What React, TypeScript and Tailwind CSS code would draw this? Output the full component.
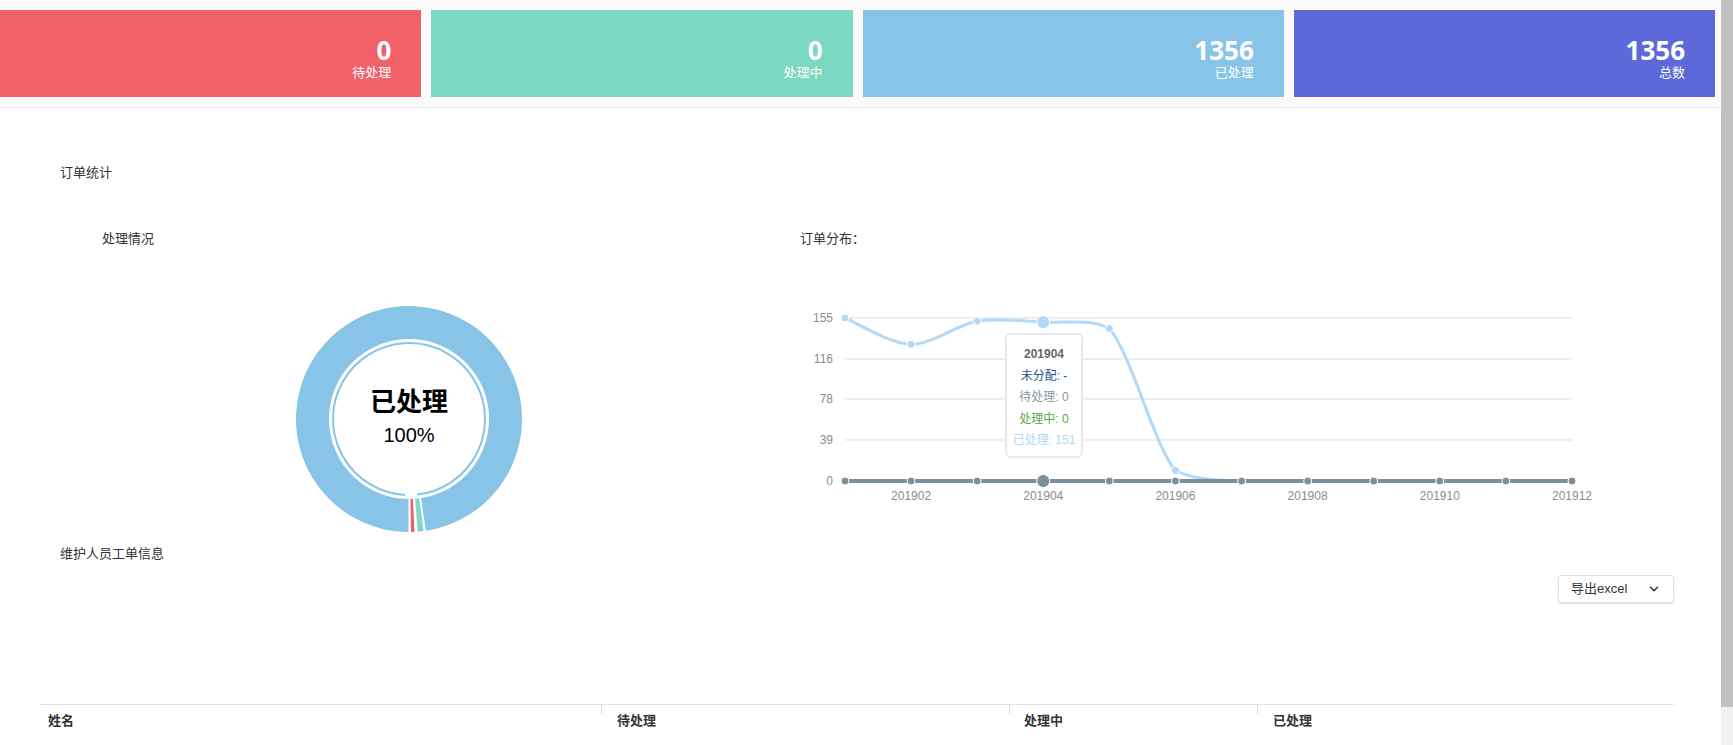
import React from "react";
import { ChevronDown } from "lucide-react";

const FONT = "'Liberation Sans','Noto Sans CJK SC',sans-serif";

const cards = [
  { value: "0", label: "待处理", bg: "bg-[#f0616a]" },
  { value: "0", label: "处理中", bg: "bg-[#7bd8c2]" },
  { value: "1356", label: "已处理", bg: "bg-[#87c4e8]" },
  { value: "1356", label: "总数", bg: "bg-[#5d69d9]" },
];

function sector(cx: number, cy: number, r0: number, r1: number, a0: number, a1: number) {
  const rad = (a: number) => (a * Math.PI) / 180;
  const p = (r: number, a: number) => [cx + r * Math.cos(rad(a)), cy + r * Math.sin(rad(a))];
  const large = a1 - a0 > 180 ? 1 : 0;
  const [x1, y1] = p(r1, a0);
  const [x2, y2] = p(r1, a1);
  const [x3, y3] = p(r0, a1);
  const [x4, y4] = p(r0, a0);
  return `M${x1},${y1} A${r1},${r1} 0 ${large} 1 ${x2},${y2} L${x3},${y3} A${r0},${r0} 0 ${large} 0 ${x4},${y4} Z`;
}

function arc(cx: number, cy: number, r: number, a0: number, a1: number) {
  const rad = (a: number) => (a * Math.PI) / 180;
  const large = a1 - a0 > 180 ? 1 : 0;
  return `M${cx + r * Math.cos(rad(a0))},${cy + r * Math.sin(rad(a0))} A${r},${r} 0 ${large} 1 ${cx + r * Math.cos(rad(a1))},${cy + r * Math.sin(rad(a1))}`;
}

function Donut() {
  const c = 120;
  return (
    <svg width="240" height="240" viewBox="0 0 240 240">
      <path d={sector(c, c, 80, 113, 90.3, 441.4)} fill="#87c4e8" />
      <path d={sector(c, c, 80, 113, 87.2, 89.0)} fill="#f0616a" />
      <path d={sector(c, c, 80, 113, 82.6, 85.6)} fill="#7bd8c2" />
      <path d={arc(c, c, 76, 93, 444)} fill="none" stroke="#87c4e8" strokeWidth="2" />
      <text x={c} y={103} textAnchor="middle" dominantBaseline="central" fontSize="26" fontWeight="700" fill="#000" style={{ fontFamily: FONT }}>
        已处理
      </text>
      <text x={c} y={136} textAnchor="middle" dominantBaseline="central" fontSize="20" fill="#000" style={{ fontFamily: FONT }}>
        100%
      </text>
    </svg>
  );
}

const blueVals = [155, 130, 152, 151, 145, 10, 0, 0, 0, 0, 0, 0];
const xAt = (i: number) => 45 + i * 66.09;
const yAt = (v: number) => 211 - (v * 163) / 155;

function smoothPath(pts: { x: number; y: number }[], s: number) {
  const minY = Math.min(...pts.map((p) => p.y));
  const maxY = Math.max(...pts.map((p) => p.y));
  const cl = (v: number) => Math.max(minY, Math.min(maxY, v));
  let d = `M${pts[0].x},${pts[0].y}`;
  for (let i = 0; i < pts.length - 1; i++) {
    const p0 = pts[i - 1] || pts[i];
    const p1 = pts[i];
    const p2 = pts[i + 1];
    const p3 = pts[i + 2] || p2;
    const c1x = p1.x + (p2.x - p0.x) * s;
    const c1y = cl(p1.y + (p2.y - p0.y) * s);
    const c2x = p2.x - (p3.x - p1.x) * s;
    const c2y = cl(p2.y - (p3.y - p1.y) * s);
    d += ` C${c1x},${c1y} ${c2x},${c2y} ${p2.x},${p2.y}`;
  }
  return d;
}

function LineChart() {
  const ticks = [155, 116, 78, 39, 0];
  const pts = blueVals.map((v, i) => ({ x: xAt(i), y: yAt(v) }));
  const labels = ["201902", "201904", "201906", "201908", "201910", "201912"];
  return (
    <div className="relative w-[800px] h-[240px]">
      <svg width="800" height="240" viewBox="0 0 800 240">
        {ticks.map((t) => (
          <g key={t}>
            <line x1="45" x2="772" y1={yAt(t)} y2={yAt(t)} stroke={t === 155 ? "#e8e8e8" : "#dedede"} strokeWidth={t === 155 ? 1.5 : 1} />
            <text x="33" y={yAt(t)} textAnchor="end" dominantBaseline="central" fontSize="12" fill="#8c8c8c" style={{ fontFamily: FONT }}>
              {t}
            </text>
          </g>
        ))}
        {labels.map((l, k) => (
          <text key={l} x={xAt(k * 2 + 1)} y="226" textAnchor="middle" dominantBaseline="central" fontSize="12" fill="#8c8c8c" style={{ fontFamily: FONT }}>
            {l}
          </text>
        ))}
        <path d={smoothPath(pts, 0.16)} fill="none" stroke="#b3d9f7" strokeWidth="3" />
        {pts.map((p, i) => (
          <circle key={i} cx={p.x} cy={p.y} r={i === 3 ? 6.5 : 4} fill="#b3d9f7" stroke="#fff" strokeWidth="1" />
        ))}
        <line x1={xAt(0)} x2={xAt(11)} y1={yAt(0)} y2={yAt(0)} stroke="#7e8f9c" strokeWidth="4" />
        {blueVals.map((_, i) => (
          <circle key={i} cx={xAt(i)} cy={yAt(0)} r={i === 3 ? 6.5 : 4} fill="#7e8f9c" stroke="#fff" strokeWidth="1" />
        ))}
      </svg>
      <div className="absolute left-[205px] top-[63px] w-[78px] h-[125px] rounded-[6px] border-2 border-[#e8e8e8] bg-white/90 pt-[9px] text-center text-[12px] leading-[21.5px]" style={{ fontFamily: FONT }}>
        <div className="font-bold text-[#666]">201904</div>
        <div className="text-[#1f4f96]">未分配: -</div>
        <div className="text-[#8795a1]">待处理: 0</div>
        <div className="text-[#57a845]">处理中: 0</div>
        <div className="text-[#b3d9f7]">已处理: 151</div>
      </div>
    </div>
  );
}

export default function App() {
  return (
    <div className="flex w-[1733px] h-[745px] overflow-hidden bg-white text-[#333]" style={{ fontFamily: FONT }}>
      <div className="w-[1721px] shrink-0">
        <div className="bg-[#fafafa] pt-[10px] pb-[10px] pr-[6px] border-b border-[#ebebeb]">
          <div className="grid grid-cols-4 gap-[10px]">
            {cards.map((c, i) => (
              <div key={i} className={`${c.bg} h-[87px] flex flex-col items-end pt-[26px] pr-[30px] text-white`}>
                <div className="text-[26px] font-bold leading-[28px]" style={{ fontFamily: "'Open Sans','Noto Sans CJK SC',sans-serif" }}>
                  {c.value}
                </div>
                <div className="text-[13px] leading-[16px] mt-[1px]">{c.label}</div>
              </div>
            ))}
          </div>
        </div>
        <div className="pl-[40px] pr-[47px]">
          <div className="ml-[20px] mt-[55px] text-[13px] leading-[20px]">订单统计</div>
          <div className="flex mt-[46px]">
            <div className="w-[760px] shrink-0 flex flex-col">
              <div className="ml-[62px] text-[13px] leading-[20px]">处理情况</div>
              <div className="ml-[249px] mt-[50px]">
                <Donut />
              </div>
            </div>
            <div className="flex flex-col">
              <div className="text-[13px] leading-[20px]">订单分布：</div>
              <div className="mt-[21px]">
                <LineChart />
              </div>
            </div>
          </div>
          <div className="ml-[20px] mt-[5px] text-[13px] leading-[20px]">维护人员工单信息</div>
          <div className="flex justify-end mt-[11px]">
            <button className="w-[116px] h-[28px] flex items-center justify-between pl-[12px] pr-[12px] rounded-[4px] border border-[#dcdfe6] bg-white shadow-[0_1px_2px_rgba(0,0,0,0.12)] text-[13px] text-[#333]">
              <span>导出excel</span>
              <ChevronDown size={14} strokeWidth={2.6} />
            </button>
          </div>
          <div className="mt-[101px] border-t border-[#e4e4e4] flex text-[13px] font-bold leading-[16px]">
            <div className="w-[561px] pt-[8px] pl-[8px]">姓名</div>
            <div className="relative w-[408px] pt-[8px] pl-[16px]">
              <span className="absolute left-0 top-0 h-[9px] w-px bg-[#dddddd]" />
              待处理
            </div>
            <div className="relative w-[248px] pt-[8px] pl-[15px]">
              <span className="absolute left-0 top-0 h-[9px] w-px bg-[#dddddd]" />
              处理中
            </div>
            <div className="relative flex-1 pt-[8px] pl-[16px]">
              <span className="absolute left-0 top-0 h-[9px] w-px bg-[#dddddd]" />
              已处理
            </div>
          </div>
        </div>
      </div>
      <div className="w-[12px] flex flex-col bg-[#f1f1f1]">
        <div className="h-[707px] bg-[#c1c1c1]" />
      </div>
    </div>
  );
}
